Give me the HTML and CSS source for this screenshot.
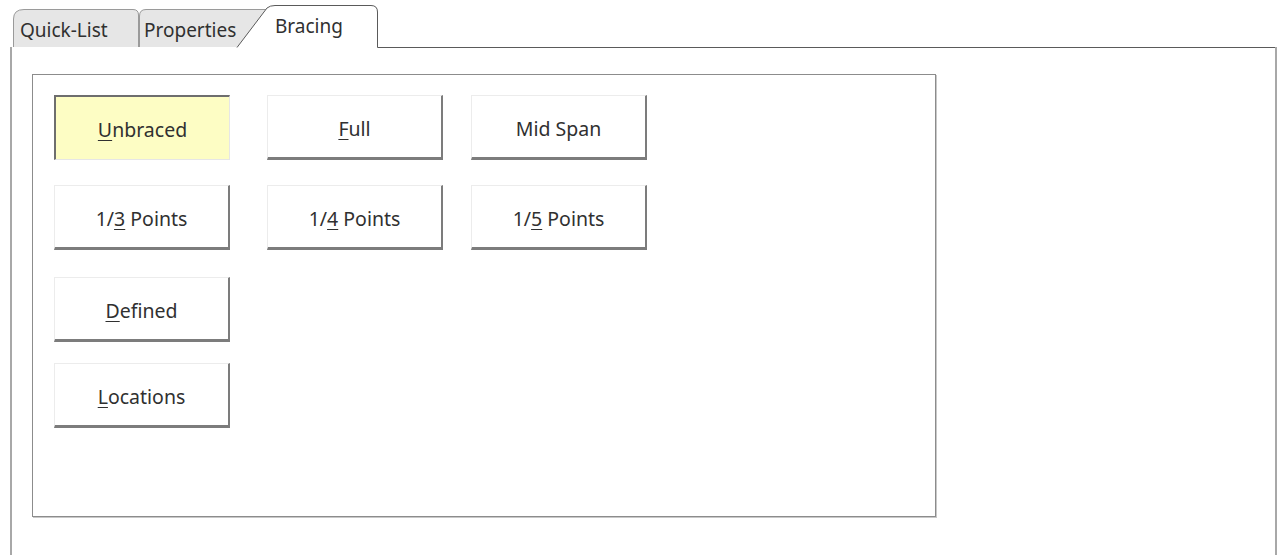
FILE: index.html
```html
<!DOCTYPE html>
<html>
<head>
<meta charset="utf-8">
<link rel="stylesheet" href="styles.css">
</head>
<body>
<div class="window">
  <svg class="tabstrip" width="1280" height="48" viewBox="0 0 1280 48">
    <path class="tab-back" d="M13.5,47 L13.5,19 Q13.5,9.5 24,9.5 L133,9.5 Q138.5,9.5 138.5,15 L138.5,47"/>
    <path class="tab-back" d="M139.5,47 L139.5,16 Q139.5,9.5 146,9.5 L268,9.5 L239,47"/>
    <path class="tab-front" d="M237,47.5 L267,8 Q270,5.5 275,5.5 L371,5.5 Q377.5,5.5 377.5,12 L377.5,47.5 L1276.5,47.5"/>
    <text class="tab-label" x="20" y="37">Quick-List</text>
    <text class="tab-label" x="144" y="37">Properties</text>
    <text class="tab-label" x="275" y="33">Bracing</text>
  </svg>
  <div class="panel">
    <div class="group">
      <div class="grid">
        <button class="btn pressed r1 c1"><u>U</u>nbraced</button>
        <button class="btn r1 c2"><u>F</u>ull</button>
        <button class="btn r1 c3">Mid Span</button>
        <button class="btn r2 c1">1/<u>3</u> Points</button>
        <button class="btn r2 c2">1/<u>4</u> Points</button>
        <button class="btn r2 c3">1/<u>5</u> Points</button>
        <button class="btn r3 c1"><u>D</u>efined</button>
        <button class="btn r4 c1"><u>L</u>ocations</button>
      </div>
    </div>
  </div>
</div>
</body>
</html>
```

FILE: styles.css
```css
html, body {
  margin: 0;
  padding: 0;
  background: #ffffff;
  overflow: hidden;
}
body {
  width: 1280px;
  height: 555px;
  font-family: "Noto Sans", "Open Sans", "Liberation Sans", sans-serif;
  color: #303030;
}
.window {
  display: flex;
  flex-direction: column;
}
.tabstrip {
  display: block;
  flex: none;
}
.tab-back {
  fill: #e6e6e6;
  stroke: #9a9a9a;
  stroke-width: 1;
}
.tab-front {
  fill: #ffffff;
  stroke: #5a5a5a;
  stroke-width: 1;
}
.tab-label {
  font-family: "Noto Sans", "Open Sans", "Liberation Sans", sans-serif;
  font-size: 19px;
  fill: #303030;
}
.panel {
  margin: -1px 3px 0 10px;
  height: 508px;
  border-left: 2px solid #a8a8a8;
  border-right: 2px solid #a8a8a8;
  padding: 27px 0 0 20px;
  box-sizing: border-box;
}
.group {
  width: 904px;
  height: 443px;
  box-sizing: border-box;
  border: 1px solid #8c8c8c;
  box-shadow: 1px 1px 0 #c8c8c8;
  padding: 20px 0 0 21px;
}
.grid {
  display: grid;
  grid-template-columns: 213px 204px 176px;
  grid-template-rows: 90px 92px 86px 65px;
}
.btn {
  width: 176px;
  height: 65px;
  box-sizing: border-box;
  background: #ffffff;
  border-style: solid;
  border-color: #ececec #7c7c7c #7c7c7c #ececec;
  border-width: 1px 2px 3px 1px;
  font-family: "Noto Sans", "Open Sans", "Liberation Sans", sans-serif;
  font-size: 19.5px;
  color: #303030;
  padding: 3px 0 0 0;
  align-self: start;
  justify-self: start;
}
.btn u {
  text-underline-offset: 3px;
}
.pressed {
  background: #fdfdc4;
  border-color: #6e6e6e #e6e6e6 #e6e6e6 #6e6e6e;
  border-width: 2px 1px 1px 2px;
}
.r1 { grid-row: 1; }
.r2 { grid-row: 2; }
.r3 { grid-row: 3; }
.r4 { grid-row: 4; }
.c1 { grid-column: 1; }
.c2 { grid-column: 2; }
.c3 { grid-column: 3; }
```
